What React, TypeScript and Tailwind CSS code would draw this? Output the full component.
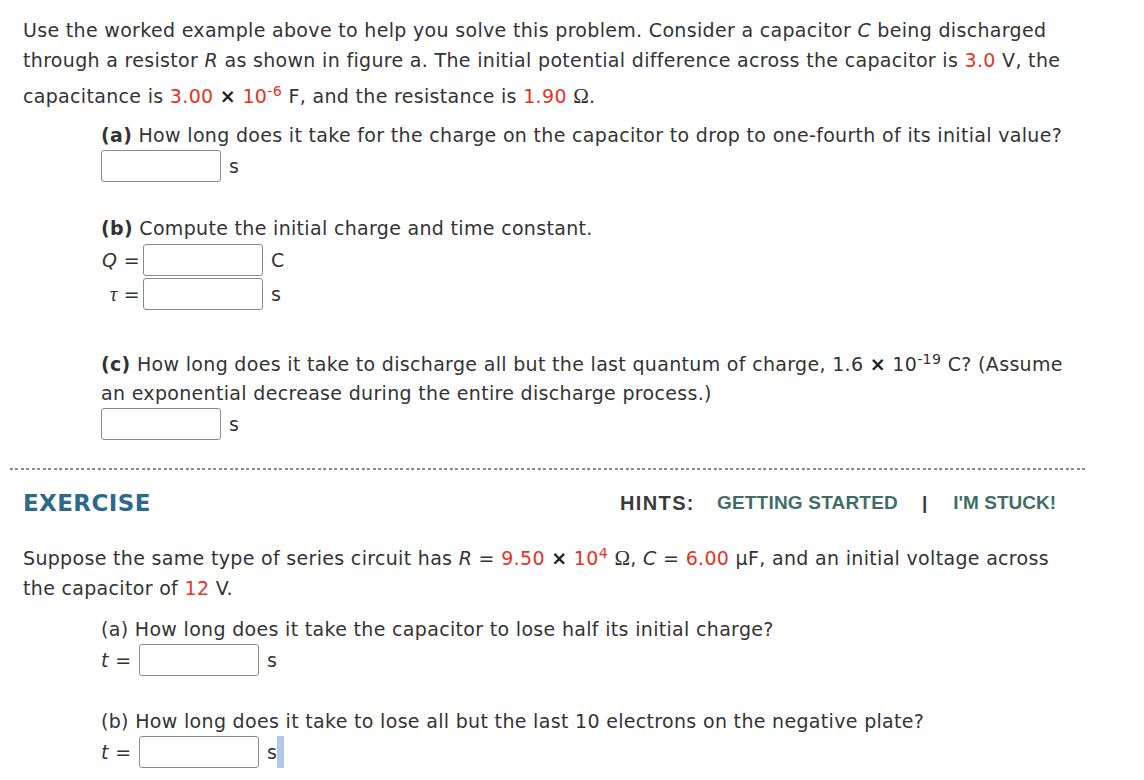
import React from 'react';

const Red = ({ children }: { children: React.ReactNode }) => (
  <span className="text-[#e8321f]">{children}</span>
);

const Times = () => <span className="font-bold text-[#222]">×</span>;

const Ohm = () => <span className="font-['Liberation_Serif',serif] text-[21px]">Ω</span>;

function Box() {
  return <div className="h-[32px] w-[120px] shrink-0 rounded-[3px] border border-[#8a8a8a] bg-white" />;
}

function AnswerRow({ label, unit, labelWidth }: { label?: React.ReactNode; unit: string; labelWidth?: string }) {
  return (
    <div className="flex h-[32px] items-center">
      {label && <div className={`flex justify-end pr-[3px] ${labelWidth}`}>{label}</div>}
      <Box />
      <span className="ml-[8px]">{unit}</span>
    </div>
  );
}

export default function App() {
  return (
    <div className="min-h-screen bg-white font-['DejaVu_Sans',Verdana,sans-serif] text-[19px] tracking-[0.32px] text-[#333]">
      <div className="px-[23px] pt-[15px]">
        <div className="h-[30px] leading-[30px] whitespace-nowrap">
          Use the worked example above to help you solve this problem. Consider a capacitor <i>C</i> being discharged
        </div>
        <div className="h-[30px] leading-[30px] whitespace-nowrap">
          through a resistor <i>R</i> as shown in figure a. The initial potential difference across the capacitor is <Red>3.0</Red> V, the
        </div>
        <div className="mt-[6px] h-[30px] leading-[30px] whitespace-nowrap">
          capacitance is <Red>3.00</Red> <Times /> <Red>10<sup>-6</sup></Red> F, and the resistance is <Red>1.90</Red> <Ohm />.
        </div>

        <div className="ml-[78px]">
          <div className="mt-[9px] h-[30px] leading-[30px] whitespace-nowrap">
            <b>(a)</b> How long does it take for the charge on the capacitor to drop to one-fourth of its initial value?
          </div>
          <AnswerRow unit="s" />

          <div className="mt-[31px] h-[30px] leading-[30px] whitespace-nowrap">
            <b>(b)</b> Compute the initial charge and time constant.
          </div>
          <div className="mt-[1px]">
            <AnswerRow label={<span><i>Q</i> =</span>} labelWidth="w-[42px]" unit="C" />
          </div>
          <div className="mt-[2px]">
            <AnswerRow label={<span><i className="font-['Liberation_Serif',serif] text-[20px]">τ</i> =</span>} labelWidth="w-[42px]" unit="s" />
          </div>

          <div className="mt-[39px] h-[30px] leading-[30px] whitespace-nowrap">
            <b>(c)</b> How long does it take to discharge all but the last quantum of charge, 1.6 <Times /> 10<sup>-19</sup> C? (Assume
          </div>
          <div className="h-[29px] leading-[29px] whitespace-nowrap">an exponential decrease during the entire discharge process.)</div>
          <AnswerRow unit="s" />
        </div>
      </div>

      <div className="mx-[10px] mt-[28px] h-[2px] w-[1075px] bg-[repeating-linear-gradient(to_right,#8c8c8c_0_3px,transparent_3px_5.5px)]" />

      <div className="mt-[18px] flex h-[30px] items-center pl-[23px] pr-[88px]">
        <div className="text-[23px] font-bold tracking-[0.4px] text-[#2b6a8b]">EXERCISE</div>
        <div className="ml-auto flex items-center font-['Liberation_Sans',Arial,sans-serif] text-[19px] font-bold tracking-normal">
          <span className="text-[20px] tracking-[1.4px] text-[#3a3a3a]">HINTS:</span>
          <span className="ml-[22px] tracking-[0.2px] text-[#3f6e69]">GETTING STARTED</span>
          <span className="ml-[24px] text-[#3a3a3a]">|</span>
          <span className="ml-[26px] text-[#3f6e69]">I'M STUCK!</span>
        </div>
      </div>

      <div className="px-[23px] pt-[25px]">
        <div className="h-[30px] leading-[30px] whitespace-nowrap">
          Suppose the same type of series circuit has <i>R</i> = <Red>9.50</Red> <Times /> <Red>10<sup>4</sup></Red> <Ohm />, <i>C</i> = <Red>6.00</Red> μF, and an initial voltage across
        </div>
        <div className="h-[30px] leading-[30px] whitespace-nowrap">
          the capacitor of <Red>12</Red> V.
        </div>

        <div className="ml-[78px]">
          <div className="mt-[11px] h-[30px] leading-[30px] whitespace-nowrap">
            (a) How long does it take the capacitor to lose half its initial charge?
          </div>
          <AnswerRow label={<span><i>t</i> =</span>} labelWidth="w-[38px] !justify-start" unit="s" />

          <div className="mt-[30px] h-[30px] leading-[30px] whitespace-nowrap">
            (b) How long does it take to lose all but the last 10 electrons on the negative plate?
          </div>
          <div className="flex h-[32px] items-center">
            <div className="w-[38px]">
              <i>t</i> =
            </div>
            <Box />
            <span className="ml-[8px]">s</span>
            <span className="h-[32px] w-[7px] bg-[#b3c6ef]" />
          </div>
        </div>
      </div>
    </div>
  );
}
